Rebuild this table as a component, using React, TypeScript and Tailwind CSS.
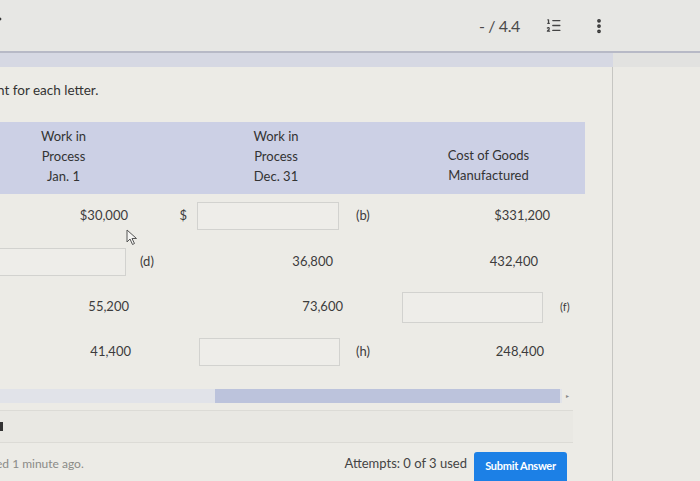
import { ChevronRight, ListOrdered, EllipsisVertical } from "lucide-react";

const Input = ({ w = "w-[142px]" }: { w?: string }) => (
  <div className={`${w} h-[28px] border border-[#d2d2cf] bg-[#eeede9]`} />
);

const App = () => {
  return (
    <div className="w-[700px] h-[481px] overflow-hidden bg-[#e9e8e4] font-['Lato','Liberation_Sans',sans-serif] text-[#3a3a3a] relative">
      {/* Top bar */}
      <div className="h-[51px] flex items-center bg-[#e7e7e4]">
        <ChevronRight className="w-[14px] h-[14px] -ml-[8px] -mt-[14px] text-[#333]" strokeWidth={2.5} />
        <div className="ml-auto flex items-center">
          <span className="text-[16px] text-[#4a4a4a] tracking-tight">- / 4.4</span>
          <ListOrdered className="ml-[25px] w-[17px] h-[17px] text-[#444]" strokeWidth={1.8} />
          <EllipsisVertical className="ml-[28px] mr-[92px] w-[18px] h-[18px] text-[#333]" strokeWidth={3} />
        </div>
      </div>
      <div className="h-[2px] bg-[#b7b9c6]" />
      <div className="flex h-[14px]">
        <div className="w-[613px] bg-[#d6d8e3]" />
        <div className="flex-1 bg-[#e2e2e0]" />
      </div>

      <div className="flex">
        {/* Left panel */}
        <div className="w-[613px] border-r border-[#c6c6c2] bg-[#ecebe6] h-[414px] flex flex-col">
          <p className="mt-[13px] text-[13.5px] text-[#333] -ml-[3px]">nt for each letter.</p>

          {/* Header */}
          <div className="mt-[22px] w-[585px] h-[72px] bg-[#ccd0e5] flex text-[13px] text-[#333] leading-[20px]">
            <div className="w-[127px] flex flex-col items-center justify-center pb-[4px]">
              <span>Work in</span>
              <span>Process</span>
              <span>Jan. 1</span>
            </div>
            <div className="w-[152px] ml-[73px] flex flex-col items-center justify-center pb-[4px]">
              <span>Work in</span>
              <span>Process</span>
              <span>Dec. 31</span>
            </div>
            <div className="flex-1 flex flex-col items-center justify-center pt-[14px] pl-[40px]">
              <span>Cost of Goods</span>
              <span>Manufactured</span>
            </div>
          </div>

          {/* Rows */}
          <div className="text-[13px] text-[#3c3c3c]">
            <div className="h-[45px] flex items-center">
              <div className="w-[128px] text-right">$30,000</div>
              <div className="w-[59px] text-right">$</div>
              <div className="ml-[10px] w-[148px]"><Input /></div>
              <div className="w-[55px] pl-[11px]">(b)</div>
              <div className="w-[150px] text-right">$331,200</div>
            </div>
            <div className="h-[46px] flex items-center">
              <div className="w-[135px] -ml-[10px]"><Input w="w-[136px]" /></div>
              <div className="w-[60px] pl-[15px]">(d)</div>
              <div className="w-[148px] text-right">36,800</div>
              <div className="w-[55px]" />
              <div className="w-[150px] text-right">432,400</div>
            </div>
            <div className="h-[45px] flex items-center">
              <div className="w-[129px] text-right">55,200</div>
              <div className="w-[214px] text-right">73,600</div>
              <div className="ml-[59px] w-[155px]"><Input w="w-[141px] h-[31px]" /></div>
              <div className="pl-[3px] text-[11px]">(f)</div>
            </div>
            <div className="h-[45px] flex items-center">
              <div className="w-[131px] text-right">41,400</div>
              <div className="ml-[68px] w-[145px]"><Input w="w-[141px]" /></div>
              <div className="w-[55px] pl-[12px]">(h)</div>
              <div className="w-[145px] text-right">248,400</div>
            </div>
          </div>

          {/* Scrollbar */}
          <div className="mt-[14px] flex items-center">
            <div className="w-[562px] h-[14px] bg-[#e1e3e9] flex">
              <div className="ml-[215px] w-[345px] h-full bg-[#bcc3dc]" />
            </div>
            <span className="ml-[4px] text-[6px] text-[#888]">▸</span>
          </div>

          <div className="mt-[7px] w-[573px] h-[34px] border-y border-[#dcdbd6] bg-[#e9e8e3] flex items-center">
            <div className="w-[3px] h-[9px] bg-[#333]" />
          </div>

          <div className="mt-auto flex items-end h-[38px]">
            <span className="mb-[8px] -ml-[4px] text-[12px] text-[#8a8a86]">ed 1 minute ago.</span>
            <span className="ml-auto mb-[8px] text-[13px] text-[#444]">Attempts: 0 of 3 used</span>
            <button className="ml-[7px] mr-[45px] w-[93px] h-[29px] rounded-t-[3px] bg-[#1c80e6] text-white text-[11px] font-bold tracking-tight">
              Submit Answer
            </button>
          </div>
        </div>

        {/* Right panel */}
        <div className="flex-1 bg-[#ebeae5] h-[414px]" />
      </div>

      {/* Mouse cursor */}
      <svg className="absolute left-[126px] top-[229px]" width="14" height="18" viewBox="0 0 14 18">
        <path d="M1 1 L1 13 L4 10 L6.5 15.5 L8.5 14.5 L6 9.5 L10.5 9.5 Z" fill="#f4f4f2" stroke="#555" strokeWidth="1" strokeLinejoin="round" />
      </svg>
    </div>
  );
};

export default App;
